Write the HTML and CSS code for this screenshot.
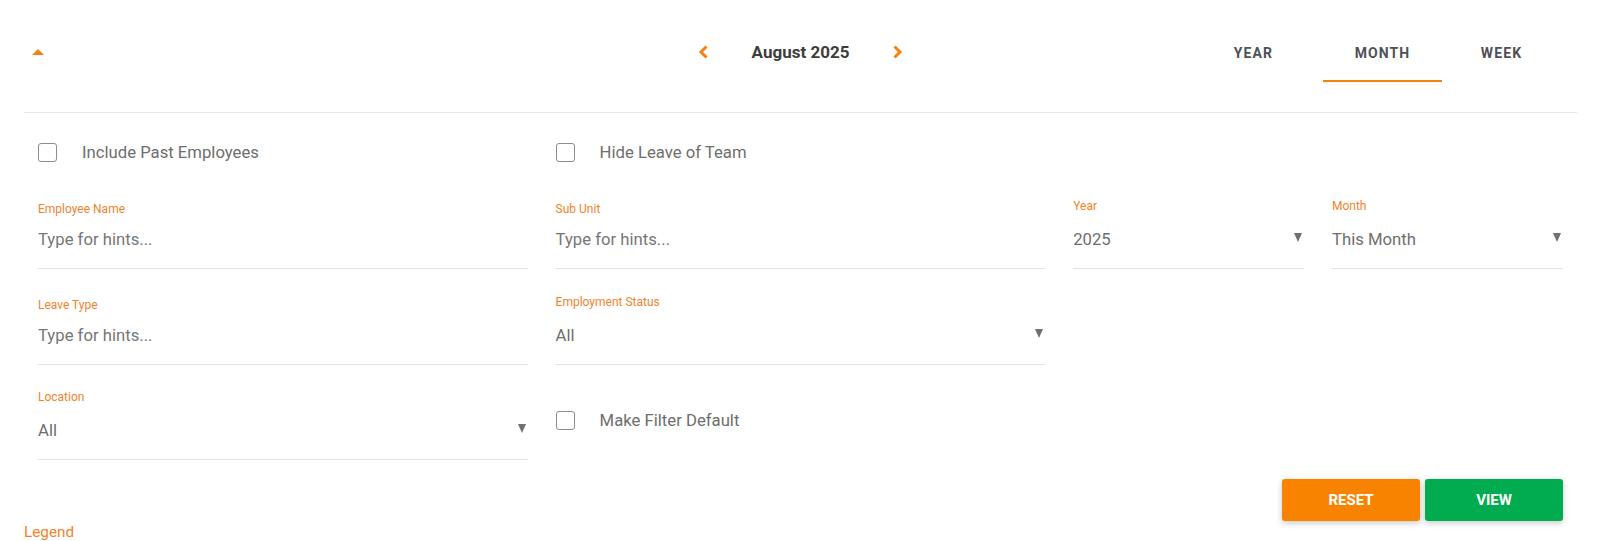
FILE: index.html
```html
<!DOCTYPE html>
<html lang="en">
<head>
<meta charset="utf-8">
<title>Leave List</title>
<link rel="stylesheet" href="styles.css">
</head>
<body>
<div class="page">
  <header class="topbar">
    <div class="toggle"><span class="caret-up"></span></div>
    <div class="period-nav">
      <span class="chev">
        <svg width="10" height="14" viewBox="0 0 10 14"><path d="M8.5 1.5 L3 7 L8.5 12.5" fill="none" stroke="#f7810f" stroke-width="3"/></svg>
      </span>
      <span class="period">August 2025</span>
      <span class="chev">
        <svg width="10" height="14" viewBox="0 0 10 14"><path d="M1.5 1.5 L7 7 L1.5 12.5" fill="none" stroke="#f7810f" stroke-width="3"/></svg>
      </span>
    </div>
    <nav class="tabs">
      <span class="tab first">YEAR</span>
      <span class="tab active">MONTH</span>
      <span class="tab">WEEK</span>
    </nav>
  </header>

  <form class="filters">
    <label class="check span2"><span class="box"></span><span>Include Past Employees</span></label>
    <label class="check span2"><span class="box"></span><span>Hide Leave of Team</span></label>
    <div class="span2 blank"></div>

    <div class="field span2">
      <div class="flabel">Employee Name</div>
      <div class="input placeholder">Type for hints...</div>
    </div>
    <div class="field span2">
      <div class="flabel">Sub Unit</div>
      <div class="input placeholder">Type for hints...</div>
    </div>
    <div class="field select">
      <div class="flabel">Year</div>
      <div class="input"><span>2025</span><span class="arrow"></span></div>
    </div>
    <div class="field select">
      <div class="flabel">Month</div>
      <div class="input"><span>This Month</span><span class="arrow"></span></div>
    </div>

    <div class="field span2">
      <div class="flabel">Leave Type</div>
      <div class="input placeholder">Type for hints...</div>
    </div>
    <div class="field select span2">
      <div class="flabel">Employment Status</div>
      <div class="input"><span>All</span><span class="arrow"></span></div>
    </div>
    <div class="span2 blank"></div>

    <div class="field select span2">
      <div class="flabel">Location</div>
      <div class="input"><span>All</span><span class="arrow"></span></div>
    </div>
    <label class="check span2 mid"><span class="box"></span><span>Make Filter Default</span></label>
    <div class="span2 blank"></div>

    <div class="actions">
      <button type="button" class="btn reset">RESET</button>
      <button type="button" class="btn view">VIEW</button>
    </div>
  </form>

  <div class="legend">Legend</div>
</div>
</body>
</html>
```

FILE: styles.css
```css
* { box-sizing: border-box; }
html, body { margin: 0; padding: 0; background: #fff; }
body {
  font-family: Roboto, "Noto Sans", "Liberation Sans", sans-serif;
  color: #666;
}
.page {
  margin: 0 23px 0 24px;
}
.topbar {
  height: 113px;
  border-bottom: 1px solid #e8e8e8;
  display: grid;
  grid-template-columns: 1fr auto 1fr;
  align-items: start;
  padding-top: 24px;
}
.toggle {
  height: 56px;
  display: flex;
  align-items: center;
  padding-left: 8px;
}
.caret-up {
  width: 0; height: 0;
  border-left: 6px solid transparent;
  border-right: 6px solid transparent;
  border-bottom: 6px solid #f7810f;
}
.period-nav {
  height: 56px;
  display: flex;
  align-items: center;
  gap: 44px;
}
.chev { width: 10px; height: 14px; display: flex; }
.period {
  font-size: 17px;
  font-weight: 700;
  color: #3d3d3d;
}
.tabs {
  justify-self: end;
  display: flex;
  padding-right: 16px;
}
.tab {
  width: 119px;
  height: 58px;
  display: flex;
  align-items: center;
  justify-content: center;
  font-size: 14px;
  font-weight: 700;
  letter-spacing: 1.1px;
  color: #4f5157;
  border-bottom: 2px solid transparent;
  padding-top: 1px;
}
.tab.first { margin-right: 10px; }
.tab.active { border-bottom-color: #f7810f; }

.filters {
  display: grid;
  grid-template-columns: repeat(6, 1fr);
  column-gap: 27.8px;
  row-gap: 27.5px;
  padding: 18.5px 14px 0 14px;
  grid-template-rows: 42px auto auto auto;
}
.span2 { grid-column: span 2; }
.check {
  display: flex;
  align-items: center;
  gap: 25px;
  font-size: 16.7px;
  color: #6e6e6e;
}
.check.mid { align-self: center; margin-bottom: 11px; }
.box {
  width: 19px; height: 19px;
  border: 1.5px solid #8c8c8c;
  border-radius: 3px;
  flex: none;
}
.field { display: flex; flex-direction: column; }
.flabel {
  font-size: 12px;
  line-height: 16px;
  color: #f5822a;
}
.select .flabel { margin-top: -3px; margin-bottom: 3px; }
.input {
  height: 52px;
  padding: 11px 0 16px 0;
  font-size: 16.7px;
  line-height: 24px;
  color: #6e6e6e;
  border-bottom: 1px solid #e4e4e4;
  display: flex;
  justify-content: space-between;
  align-items: center;
}
.placeholder { color: #767676; }
.arrow {
  width: 0; height: 0;
  border-left: 4.5px solid transparent;
  border-right: 4.5px solid transparent;
  border-top: 9px solid #707070;
  margin-right: 2px;
  margin-top: -5px;
}
.actions {
  grid-column: 1 / -1;
  display: flex;
  justify-content: flex-end;
  gap: 5px;
  margin-top: -8.5px;
}
.btn {
  width: 138px;
  height: 42px;
  border: none;
  border-radius: 3px;
  font-family: Roboto, "Liberation Sans", sans-serif;
  font-size: 15px;
  font-weight: 700;
  color: #fff;
  box-shadow: 0 2px 6px rgba(0,0,0,0.22);
}
.btn.reset { background: #f88300; }
.btn.view { background: #00ac4f; }
.legend {
  font-size: 15.3px;
  color: #f5822a;
  margin-top: 1px;
  line-height: 20px;
}
```
